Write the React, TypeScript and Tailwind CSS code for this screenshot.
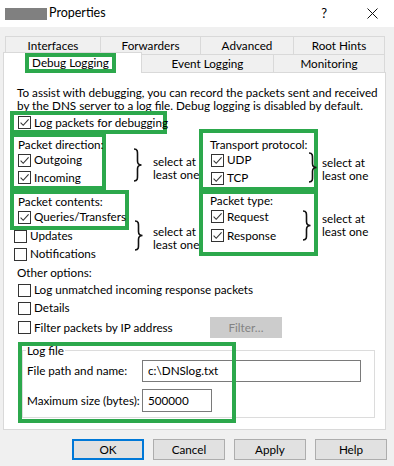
import React from 'react';

function Check({ checked }: { checked?: boolean }) {
  return (
    <span className="w-[13px] h-[13px] border border-[#333333] bg-white flex items-center justify-center shrink-0">
      {checked && (
        <svg width="11" height="11" viewBox="0 0 11 11" fill="none">
          <path d="M1.6 5.6 L4.2 8.3 L9.6 2.4" stroke="#333333" strokeWidth="1.1" />
        </svg>
      )}
    </span>
  );
}

function CheckRow({ label, checked, className = '' }: { label: string; checked?: boolean; className?: string }) {
  return (
    <div className={`flex items-center ${className}`}>
      <Check checked={checked} />
      <span className="ml-[3px]">{label}</span>
    </div>
  );
}

function Brace({ h = 32, className = '' }: { h?: number; className?: string }) {
  const m = h / 2;
  return (
    <svg width="11" height={h} viewBox={`0 0 11 ${h}`} fill="none" className={`shrink-0 ${className}`}>
      <path
        d={`M2 1 C6 1 5.5 4 5.5 8 L5.5 ${m - 4} C5.5 ${m - 1} 6.5 ${m} 9.5 ${m} C6.5 ${m} 5.5 ${m + 1} 5.5 ${m + 4} L5.5 ${h - 8} C5.5 ${h - 4} 6 ${h - 1} 2 ${h - 1}`}
        stroke="#111111"
        strokeWidth="1.6"
      />
    </svg>
  );
}

function SelectText({ className = '' }: { className?: string }) {
  return (
    <div className={`leading-[13px] ${className}`}>
      select at
      <br />
      least one
    </div>
  );
}

export default function App() {
  return (
    <div className="w-[394px] h-[466px] bg-[#f0f0f0] text-[11.7px] text-black overflow-hidden whitespace-nowrap font-['Lato',sans-serif]">
      {/* Title bar */}
      <div className="h-[27px] bg-white flex items-center">
        <div className="ml-[5px] w-[42px] h-[12px] bg-[#808080]" />
        <span className="ml-[2px] text-[12.5px]">Properties</span>
        <span className="ml-auto text-[13px]">?</span>
        <svg width="11" height="11" viewBox="0 0 11 11" className="ml-[40px] mr-[16px]">
          <path d="M0.5 0.5 L10.5 10.5 M10.5 0.5 L0.5 10.5" stroke="#111" strokeWidth="1" />
        </svg>
      </div>

      {/* Tabs */}
      <div className="mt-[9px] flex ml-[5px] h-[18px]">
        {[
          ['Interfaces', 'w-[95px]'],
          ['Forwarders', 'w-[100px]'],
          ['Advanced', 'w-[93px]'],
          ['Root Hints', 'w-[92px] border-r'],
        ].map(([t, w]) => (
          <div key={t} className={`${w} h-full border-t border-l border-[#d9d9d9] flex items-center justify-center`}>
            {t}
          </div>
        ))}
      </div>
      <div className="flex items-start h-[18px]">
        <div className="relative z-10 ml-[3px] -mt-[2px] w-[139px] h-[21px] bg-white border border-b-0 border-[#d9d9d9]">
          <div className="ml-[21px] w-[91px] h-[20px] border-4 border-[#2ca84c] flex items-center justify-center">
            Debug Logging
          </div>
        </div>
        <div className="w-[131px] h-full border-t border-[#d9d9d9] flex items-center justify-center">Event Logging</div>
        <div className="w-[112px] h-full border-t border-l border-r border-[#d9d9d9] flex items-center justify-center">
          Monitoring
        </div>
      </div>

      {/* Panel */}
      <div className="ml-[3px] w-[383px] h-[358px] bg-white border border-[#d9d9d9]">
        <p className="pl-[13px] pt-[13px] leading-[13px]">
          To assist with debugging, you can record the packets sent and received
          <br />
          by the DNS server to a log file. Debug logging is disabled by default.
        </p>

        <div className="flex items-start pl-[6px] -mt-[1px]">
          {/* Left column */}
          <div className="w-[189px] shrink-0">
            <div className="w-[157px] h-[23px] border-4 border-[#2ca84c] flex items-center pl-[4px]">
              <CheckRow label="Log packets for debugging" checked />
            </div>

            <div className="flex items-start">
              <div className="w-[96px] -mt-[1px] border-4 border-[#2ca84c] pl-[4px]">
                <div className="h-[14px] leading-[14px]">Packet direction:</div>
                <CheckRow label="Outgoing" checked className="h-[18px]" />
                <CheckRow label="Incoming" checked className="h-[17px]" />
              </div>
              <Brace h={34} className="ml-[26px] mt-[14px]" />
              <SelectText className="ml-[10px] mt-[21px]" />
            </div>

            <div className="flex items-start">
              <div className="w-[119px]">
                <div className="w-[119px] border-4 border-[#2ca84c] pl-[4px]">
                  <div className="h-[14px] leading-[14px]">Packet contents:</div>
                  <CheckRow label="Queries/Transfers" checked className="h-[18px]" />
                </div>
                <div className="pl-[4px] -mt-[3px]">
                  <CheckRow label="Updates" className="h-[18px]" />
                  <CheckRow label="Notifications" className="h-[18px]" />
                </div>
              </div>
              <Brace h={31} className="ml-[4px] mt-[30px]" />
              <SelectText className="ml-[9px] mt-[35px]" />
            </div>
          </div>

          {/* Right column */}
          <div className="mt-[18px]">
            <div className="flex items-start">
              <div className="w-[119px] border-4 border-[#2ca84c] pt-[4px] flex items-start">
                <div className="pl-[7px] flex-1">
                  <div className="h-[14px] leading-[14px]">Transport protocol:</div>
                  <CheckRow label="UDP" checked className="h-[18px] pl-px" />
                  <CheckRow label="TCP" checked className="h-[18px] pl-px" />
                </div>
                <Brace h={31} className="mt-[15px] mr-[2px]" />
              </div>
              <SelectText className="ml-[4px] mt-[27px]" />
            </div>

            <div className="flex items-start -mt-[1px]">
              <div className="w-[119px] border-4 border-[#2ca84c] pb-[7px] flex items-start">
                <div className="pl-[7px] flex-1">
                  <div className="h-[13px] leading-[13px]">Packet type:</div>
                  <CheckRow label="Request" checked className="h-[19px] pl-px" />
                  <CheckRow label="Response" checked className="h-[19px] pl-px" />
                </div>
                <Brace h={31} className="mt-[16px] mr-[2px]" />
              </div>
              <SelectText className="ml-[4px] mt-[22px]" />
            </div>
          </div>
        </div>

        {/* Other options */}
        <div className="pl-[13px]">
          <div className="h-[18px] leading-[18px]">Other options:</div>
          <CheckRow label="Log unmatched incoming response packets" className="h-[18px] pl-px" />
          <CheckRow label="Details" className="h-[18px] pl-px" />
          <div className="flex items-center h-[21px]">
            <CheckRow label="Filter packets by IP address" className="w-[193px] pl-px" />
            <div className="w-[72px] h-[21px] bg-[#cccccc] text-[#838383] flex items-center justify-center">
              Filter…
            </div>
          </div>
        </div>

        {/* Log file group */}
        <div className="relative ml-[18px] mt-[12px] w-[353px] h-[68px] border border-[#dcdcdc] pl-[4px] pt-[9px]">
          <span className="absolute left-[3px] -top-[8px] bg-white px-px leading-[14px]">Log file</span>
          <div className="flex items-center h-[22px]">
            <span className="w-[115px] shrink-0">File path and name:</span>
            <div className="w-[219px] h-[22px] border border-[#7a7a7a] pl-[5px] flex items-center">c:\DNSlog.txt</div>
          </div>
          <div className="flex items-center h-[23px] mt-[7px]">
            <span className="w-[115px] shrink-0">Maximum size (bytes):</span>
            <div className="w-[70px] h-[23px] border border-[#7a7a7a] pl-[5px] flex items-center">500000</div>
          </div>
          <div className="absolute -left-[5px] -top-[9px] w-[218px] h-[81px] border-4 border-[#2ca84c] pointer-events-none" />
        </div>
      </div>

      {/* Buttons */}
      <div className="flex gap-[9px] ml-[72px] mt-[9px]">
        <button className="w-[72px] h-[21px] bg-[#e1e1e1] border-2 border-[#0078d7] flex items-center justify-center">OK</button>
        <button className="w-[72px] h-[21px] bg-[#e1e1e1] border border-[#adadad] flex items-center justify-center">Cancel</button>
        <button className="w-[72px] h-[21px] bg-[#e1e1e1] border border-[#adadad] flex items-center justify-center">Apply</button>
        <button className="w-[72px] h-[21px] bg-[#e1e1e1] border border-[#adadad] flex items-center justify-center">Help</button>
      </div>
    </div>
  );
}
